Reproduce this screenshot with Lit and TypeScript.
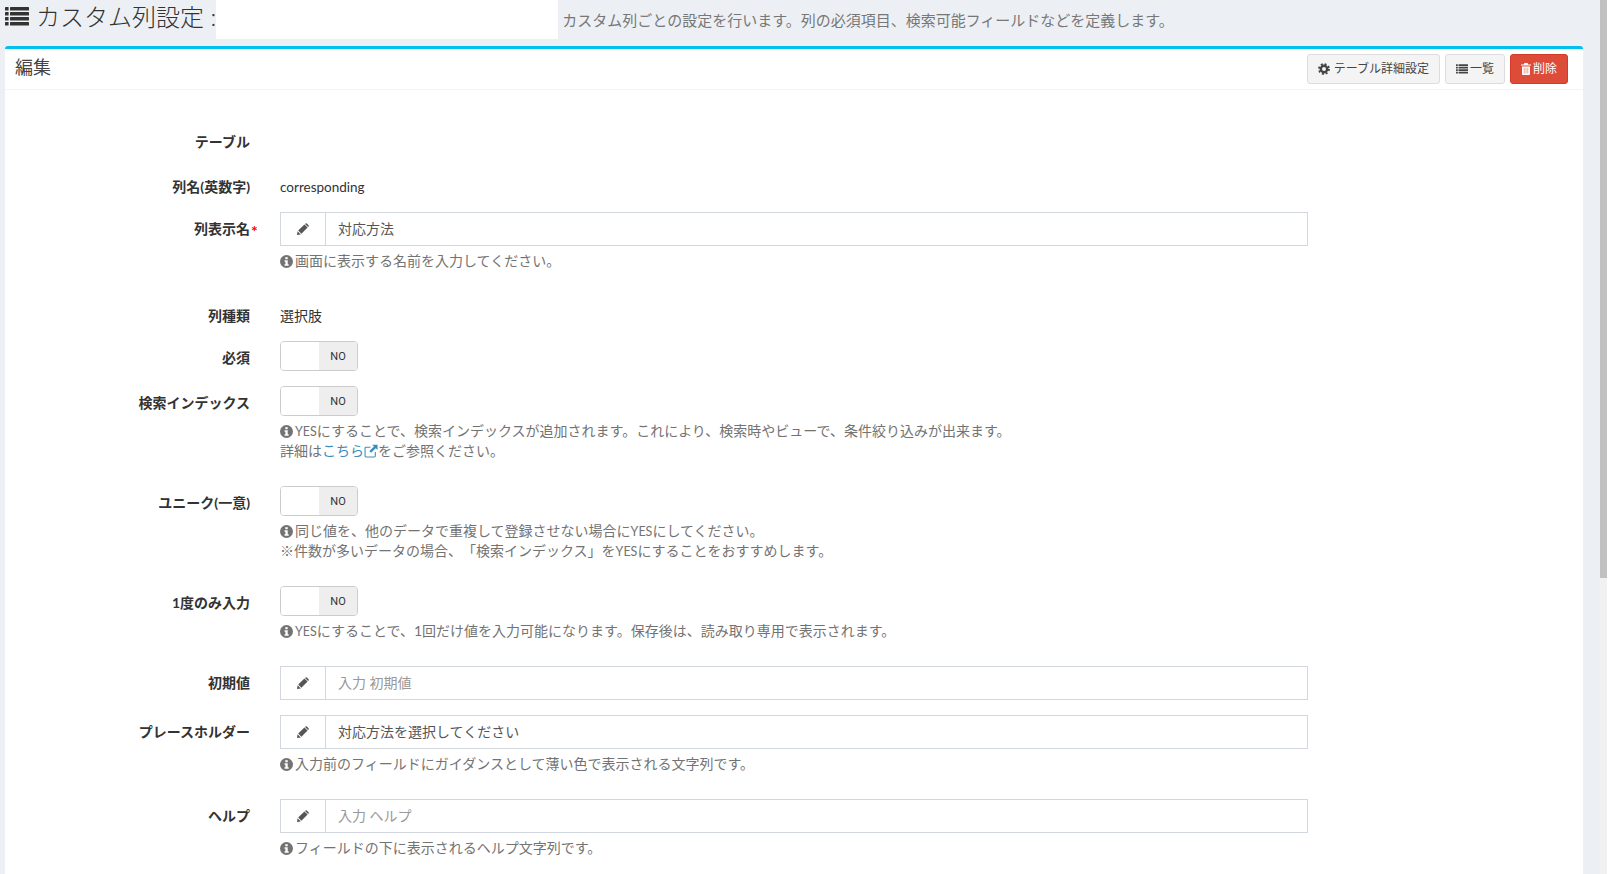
import { LitElement, html, css, svg } from "lit";
import { customElement } from "lit/decorators.js";

const listIcon = (cls: string) => html`<svg class=${cls} viewBox="0 0 24 19" aria-hidden="true">
  ${[0, 5, 10, 15].map(
    (y) => svg`<rect x="0" y=${y} width="3.6" height="3.6" rx=".6"/><rect x="5" y=${y} width="19" height="3.6" rx=".6"/>`
  )}
</svg>`;

const pencil = html`<svg class="pencil" viewBox="0 0 12 12" aria-hidden="true">
  <path d="M0 12 L.6 8.2 L3.8 11.4 Z M1.2 7.6 L7.4 1.4 L10.6 4.6 L4.4 10.8 Z M8 .9 L8.6 .4 Q9.2 0 9.8 .4 L11.6 2.2 Q12 2.8 11.6 3.4 L11.1 4 Z"/>
</svg>`;

const info = html`<svg class="info" viewBox="0 0 12 12" aria-hidden="true">
  <circle cx="6" cy="6" r="6" fill="#737373"/>
  <rect x="4.9" y="2" width="2.2" height="1.9" fill="#fff"/>
  <path d="M4.2 4.9 H7.1 V8.6 H8 V10 H4.2 V8.6 H5 V6.2 H4.2 Z" fill="#fff"/>
</svg>`;

const gear = html`<svg class="btn-icon gear" viewBox="0 0 12 12" aria-hidden="true">
  <circle cx="6" cy="6" r="3.2" fill="none" stroke="#444" stroke-width="2.4"/>
  <circle cx="6" cy="6" r="5" fill="none" stroke="#444" stroke-width="1.8" stroke-dasharray="2 1.93"/>
</svg>`;

const trash = html`<svg class="btn-icon trash" viewBox="0 0 10 12" aria-hidden="true">
  <path fill="#fff" d="M3.4 0 H6.6 L7.2 1.4 H10 V2.6 H0 V1.4 H2.8 Z M1 3.4 H9 V11 Q9 12 8 12 H2 Q1 12 1 11 Z"/>
  <path fill="#dd4b39" d="M2.8 4.8 H3.6 V10.4 H2.8 Z M4.6 4.8 H5.4 V10.4 H4.6 Z M6.4 4.8 H7.2 V10.4 H6.4 Z" opacity=".6"/>
</svg>`;

const extLink = html`<svg class="ext" viewBox="0 0 13 13" aria-hidden="true">
  <path fill="none" stroke="#3c8dbc" stroke-width="1" d="M10.5 7.5 V11.2 Q10.5 12 9.7 12 H1.8 Q1 12 1 11.2 V3.8 Q1 3 1.8 3 H6"/>
  <path fill="#3c8dbc" d="M7.6 .6 H12.6 V5.6 L10.9 3.9 L6.6 8.2 L5 6.6 L9.3 2.3 Z"/>
</svg>`;

const yes = html`<span class="yes">YES</span>`;

@customElement("app-root")
export class AppRoot extends LitElement {
  static styles = css`
    :host {
      display: flex;
      height: 874px;
      overflow: hidden;
      background: #fff;
      font-family: Lato, "Noto Sans CJK JP", sans-serif;
      font-size: 14px;
      line-height: 20px;
      color: #333;
      padding-right: 4px;
      box-sizing: border-box;
      text-spacing-trim: space-all;
    }
    svg { display: block; flex: none; fill: currentColor; }

    .main {
      flex: 1;
      min-width: 0;
      display: flex;
      flex-direction: column;
      background: #ecf0f5;
      padding: 0 17px 0 5px;
    }
    .scrollbar {
      width: 7px;
      flex: none;
      display: flex;
      flex-direction: column;
      background: #f1f1f1;
    }
    .thumb { height: 578px; background: #c1c1c1; }

    .page-head {
      height: 46px;
      flex: none;
      display: flex;
      align-items: flex-start;
    }
    .head-icon { width: 24px; height: 19px; margin-top: 7px; color: #333; }
    .page-title {
      margin: 0 0 0 7px;
      font-size: 24px;
      line-height: 34px;
      font-weight: 300;
      color: #333;
      white-space: pre;
    }
    .blank { width: 342px; height: 39px; background: #fff; flex: none; }
    .page-sub { margin: 10px 0 0 4px; color: #777; font-size: 15px; }

    .card {
      flex: 1;
      background: #fff;
      border-top: 3px solid #00c0ef;
      border-radius: 3px 3px 0 0;
      display: flex;
      flex-direction: column;
    }
    .card-head {
      height: 40px;
      flex: none;
      box-sizing: content-box;
      display: flex;
      align-items: center;
      justify-content: space-between;
      padding: 0 15px 0 10px;
      border-bottom: 1px solid #f4f4f4;
    }
    .card-title { margin: 0 0 4px; font-size: 18px; font-weight: 400; line-height: 20px; color: #444; }
    .tools { display: flex; gap: 5px; }
    .btn {
      display: flex;
      align-items: center;
      height: 30px;
      box-sizing: border-box;
      padding: 0 10px;
      font: inherit;
      font-size: 12px;
      line-height: 18px;
      border: 1px solid #ddd;
      border-radius: 3px;
      background: #f4f4f4;
      color: #444;
    }
    .btn.danger { background: #dd4b39; border-color: #d73925; color: #fff; }
    .btn-icon { height: 12px; }
    .gear { width: 12px; margin-right: 4px; }
    .btn-list { width: 12px; height: 10px; margin-right: 2px; color: #444; }
    .trash { width: 10px; margin-right: 2px; }

    .form {
      padding-top: 32px;
      display: grid;
      grid-template-columns: 245px 1028px;
      column-gap: 30px;
      row-gap: 15px;
      align-content: start;
    }
    .label {
      font-weight: 700;
      text-align: right;
      padding-top: 7px;
      position: relative;
      color: #333;
    }
    .label.static { padding-top: 10px; }
    .star {
      position: absolute;
      left: 100%;
      top: 9px;
      font-size: 16px;
      color: #f00;
      padding-left: 1px;
    }
    .value.static { padding-top: 10px; height: 20px; }
    .latin { font-size: 13.5px; }

    .group { display: flex; height: 34px; box-sizing: border-box; }
    .addon {
      width: 46px;
      box-sizing: border-box;
      flex: none;
      display: flex;
      align-items: center;
      justify-content: center;
      border: 1px solid #d2d6de;
      color: #555;
    }
    .pencil { width: 12px; height: 12px; }
    input {
      flex: 1;
      min-width: 0;
      height: 34px;
      box-sizing: border-box;
      border: 1px solid #d2d6de;
      border-left: 0;
      outline: 0;
      padding: 0 12px 2px;
      font: inherit;
      color: #555;
      background: #fff;
    }
    input::placeholder { color: #999; opacity: 1; }

    .toggle {
      width: 78px;
      height: 30px;
      box-sizing: border-box;
      display: flex;
      border: 1px solid #ccc;
      border-radius: 4px;
      overflow: hidden;
    }
    .toggle .off { width: 38px; background: #fff; }
    .toggle .no {
      flex: 1;
      background: #eee;
      display: flex;
      align-items: center;
      justify-content: center;
      padding-top: 1px;
      font-family: Roboto, sans-serif;
      font-size: 11px;
      color: #333;
    }

    .help { margin: 5px 0 10px; color: #737373; }
    .help-line { display: flex; align-items: center; white-space: pre; height: 20px; }
    .info { width: 13px; height: 13px; margin-right: 2px; }
    .yes { font-size: 12.5px; line-height: 1; }
    a { color: #3c8dbc; text-decoration: none; }
    .inline-link { display: inline-flex; align-items: center; height: 20px; vertical-align: top; }
    .ext { width: 14px; height: 14px; }
  `;

  private help(lines: unknown[]) {
    return html`<div class="help">
      ${lines.map(
        (l, i) => html`<div class="help-line">${i === 0 ? info : ""}<span>${l}</span></div>`
      )}
    </div>`;
  }

  private input(value: string, placeholder: string) {
    return html`<div class="group">
      <div class="addon">${pencil}</div>
      <input type="text" .value=${value} placeholder=${placeholder} />
    </div>`;
  }

  private toggle() {
    return html`<div class="toggle"><div class="off"></div><div class="no">NO</div></div>`;
  }

  render() {
    return html`
      <div class="main">
        <header class="page-head">
          ${listIcon("head-icon")}
          <h1 class="page-title">カスタム列設定 :</h1>
          <div class="blank"></div>
          <div class="page-sub">カスタム列ごとの設定を行います。列の必須項目、検索可能フィールドなどを定義します。</div>
        </header>
        <section class="card">
          <div class="card-head">
            <h2 class="card-title">編集</h2>
            <div class="tools">
              <button class="btn">${gear}テーブル詳細設定</button>
              <button class="btn">${listIcon("btn-list")}一覧</button>
              <button class="btn danger">${trash}削除</button>
            </div>
          </div>
          <div class="form">
            <div class="label static">テーブル</div>
            <div class="value static"></div>

            <div class="label static">列名(英数字)</div>
            <div class="value static latin">corresponding</div>

            <div class="label">列表示名<span class="star">*</span></div>
            <div>
              ${this.input("対応方法", "")}
              ${this.help(["画面に表示する名前を入力してください。"])}
            </div>

            <div class="label static">列種類</div>
            <div class="value static">選択肢</div>

            <div class="label">必須</div>
            <div>${this.toggle()}</div>

            <div class="label">検索インデックス</div>
            <div>
              ${this.toggle()}
              ${this.help([
                html`${yes}にすることで、検索インデックスが追加されます。これにより、検索時やビューで、条件絞り込みが出来ます。`,
                html`詳細は<a class="inline-link">こちら${extLink}</a>をご参照ください。`,
              ])}
            </div>

            <div class="label">ユニーク(一意)</div>
            <div>
              ${this.toggle()}
              ${this.help([
                html`同じ値を、他のデータで重複して登録させない場合に${yes}にしてください。`,
                html`※件数が多いデータの場合、「検索インデックス」を${yes}にすることをおすすめします。`,
              ])}
            </div>

            <div class="label">1度のみ入力</div>
            <div>
              ${this.toggle()}
              ${this.help([html`${yes}にすることで、1回だけ値を入力可能になります。保存後は、読み取り専用で表示されます。`])}
            </div>

            <div class="label">初期値</div>
            <div>${this.input("", "入力 初期値")}</div>

            <div class="label">プレースホルダー</div>
            <div>
              ${this.input("対応方法を選択してください", "")}
              ${this.help(["入力前のフィールドにガイダンスとして薄い色で表示される文字列です。"])}
            </div>

            <div class="label">ヘルプ</div>
            <div>
              ${this.input("", "入力 ヘルプ")}
              ${this.help(["フィールドの下に表示されるヘルプ文字列です。"])}
            </div>
          </div>
        </section>
      </div>
      <div class="scrollbar"><div class="thumb"></div></div>
    `;
  }
}
